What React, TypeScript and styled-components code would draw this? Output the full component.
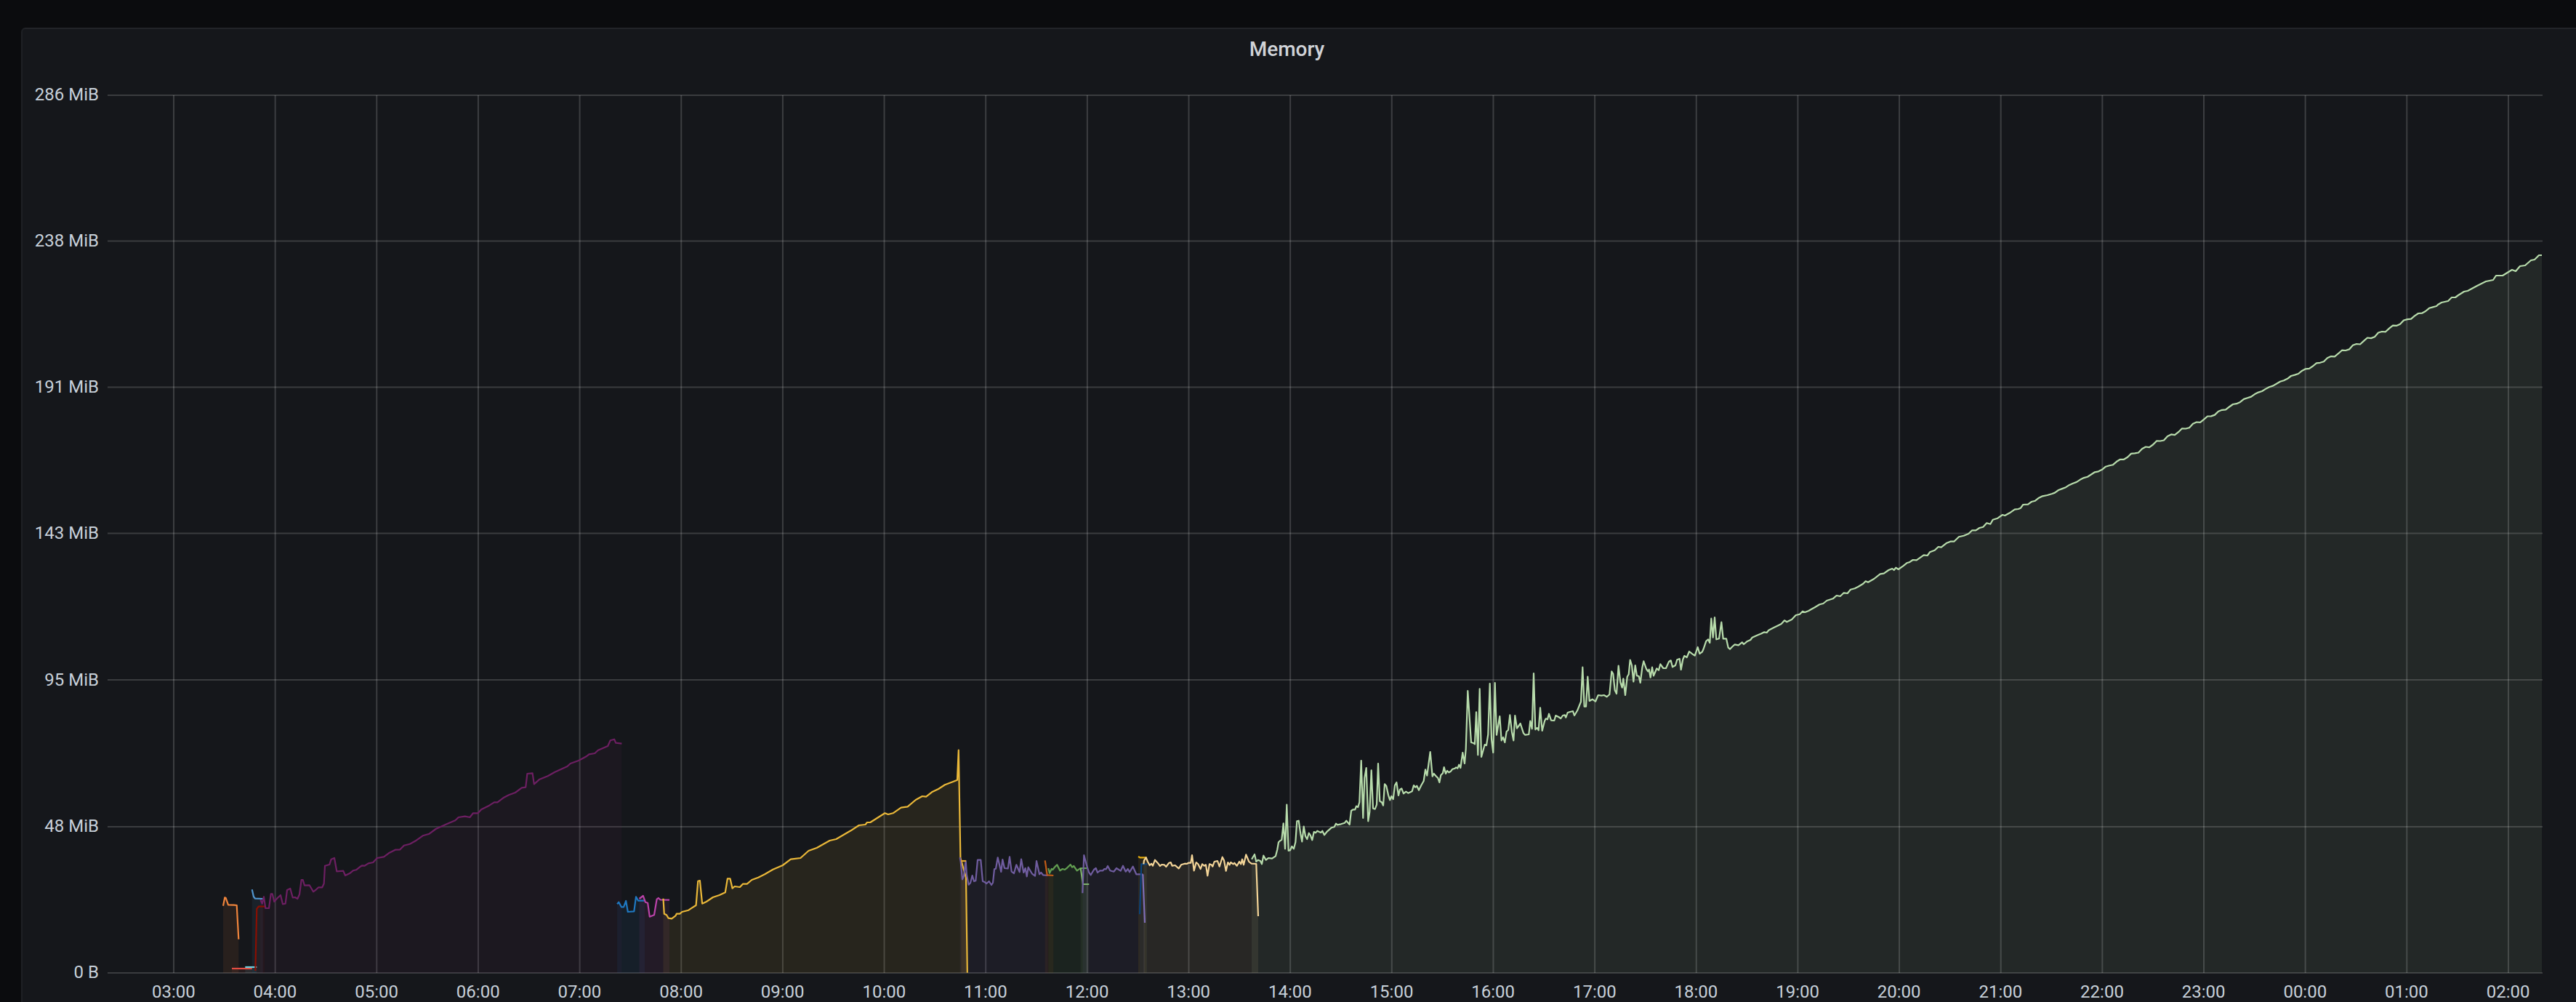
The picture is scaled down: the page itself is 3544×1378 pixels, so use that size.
import React from 'react';
import styled, { createGlobalStyle } from 'styled-components';

type Point = [number, number];

// points were read off zoomed crops, so each run keeps its crop offset and scale
const trace = (ox: number, oy: number, sx: number, sy: number, raw: string): Point[] =>
    raw
        .trim()
        .split(/\s+/)
        .map((pair) => {
            const [x, y] = pair.split(',').map(Number);
            return [ox + x / sx, oy + y / sy] as Point;
        });

const BASE_Y = 1338;
const PLOT_X = 148;
const PLOT_TOP = 130;
const PLOT_W = 3350;
const PLOT_H = 1209;
const HOUR = 139.65;
const FIRST_HOUR_X = 239;

const yTicks = ['286 MiB', '238 MiB', '191 MiB', '143 MiB', '95 MiB', '48 MiB', '0 B'];
const xTicks = [
    '03:00', '04:00', '05:00', '06:00', '07:00', '08:00', '09:00', '10:00', '11:00', '12:00', '13:00', '14:00',
    '15:00', '16:00', '17:00', '18:00', '19:00', '20:00', '21:00', '22:00', '23:00', '00:00', '01:00', '02:00',
];
const gridY = [131, 331.5, 532.5, 733.5, 935, 1137, 1338];

// long steady climb between 22:00-ish crops, same small stair-steps as the rest
const steadyClimb = (): Point[] => {
    const pts: Point[] = [];
    for (let x = 2827; x < 3354; x += 5) {
        const y = 679 - (x - 2823) * 0.4896;
        pts.push([x, y + 1.3 * Math.sin(x * 0.37) + 0.8 * Math.sin(x * 0.91)]);
    }
    return pts;
};

const purpleLong = [
    ...trace(280, 1180, 3, 3, `235,172 242,188 249,160 256,207 270,207 278,148 284,148 292,180 305,165 318,153 327,190 338,188 345,132 358,126 368,163 378,162 388,168 396,150 404,90 410,90 417,113 437,112 453,139 465,130 475,121 490,121 497,105 501,32 520,27 527,5 540,0 550,55 577,53 585,72 605,62 617,52 630,49 645,37 655,31 665,32 680,22 700,18`),
    ...trace(200, 950, 2.24, 3, `714,690 735,685 750,670 770,656 785,655 797,638 815,632 835,617 855,598 875,590 895,570 915,558 935,546 955,535 965,522 985,518 1000,522 1010,505 1025,505 1035,490 1060,473 1075,460 1085,460 1105,440 1120,430 1140,420 1160,400 1172,398 1177,342 1193,340 1198,385 1215,365 1240,352 1262,335 1300,312 1310,300 1335,288 1360,270 1367,262 1385,258 1395,245 1425,228 1433,205 1445,200 1450,215 1468,218`),
];

const yellowLong = trace(800, 950, 2.24, 3, `252,857 255,920 262,925 268,938 278,940 290,928 293,920 303,920 310,912 330,905 340,896 353,885 359,785 365,783 372,878 385,870 405,852 425,843 443,832 450,775 458,775 465,815 472,807 488,810 497,797 510,797 525,780 545,770 565,757 590,737 620,720 645,695 675,690 700,660 725,648 765,618 785,612 830,577 855,555 875,552 880,543 890,543 935,505 945,510 960,505 985,482 1005,478 1030,450 1050,435 1062,437 1080,418 1100,405 1120,388 1145,375 1158,368 1162,245 1168,690 1185,770 1189,1163`);

const greenLong = [
    ...trace(1280, 1120, 3, 3, `1326,185 1338,165 1345,195 1352,188 1362,192 1368,205 1375,170 1385,188 1395,180 1410,182 1425,172`),
    ...trace(1720, 920, 3, 3, `112,745 117,715 125,707 130,705 137,637 144,742 151,560 158,750 165,748 172,732 180,742 187,715 193,628 200,626 208,680 214,712 221,650 228,690 235,702 242,677 248,685 256,706 263,672 270,676 277,668 285,672 292,675 298,668 306,685 318,670 335,655 347,652 354,638 360,643 375,640 390,635 397,626 410,642 417,585 425,580 433,580 438,566 445,570 451,550 458,378 466,615 472,450 479,408 487,628 493,590 500,418 507,575 515,578 522,560 528,390 535,545 543,550 549,563 555,475 562,483 570,520 577,541 583,525 590,537 597,480 604,468 612,522 618,498 625,493 633,514 643,506 652,512 668,505 675,480 682,488 688,482 696,500 706,480 716,462 723,415 730,440 743,342 752,443 758,432 768,443 775,450 781,468 787,438 795,430 800,405 807,432 813,420 820,427 828,422 835,413 845,410 850,406 856,410 862,395 868,408 877,345 885,390 890,330 898,90 912,303 920,305 927,310 933,178 940,355 947,82 954,363 968,312 975,315 982,270 989,60 996,290 1003,345 1010,57 1017,272 1030,195 1037,295 1044,282 1051,303 1058,258 1065,252 1072,190 1080,260 1087,295 1093,192 1101,245 1115,225 1128,265 1135,272 1150,270 1156,215 1163,247 1170,18 1177,250 1184,243 1190,253 1197,160`),
    ...trace(2000, 880, 3, 3, `365,375 375,335 380,325 387,328 393,305 402,332 415,333 421,312 433,318 442,324 450,312 458,310 463,320 470,300 480,297 492,294 498,312 510,292 525,255 532,113 539,275 546,275 553,152 560,252 572,245 585,254 596,228 610,230 620,228 632,235 643,225 652,130 658,140 665,208 672,222 680,107 688,175 695,197 700,160 708,228 716,152 722,142 728,83 735,105 742,172 749,105 756,148 764,150 770,177 778,115 784,88 795,120 802,130 806,122 812,155 819,113 825,148 838,118 846,125 853,100 865,117 876,117 888,90 896,85 903,112 915,105 922,82 932,78 938,123 946,80 952,66 962,72 972,48 985,58 995,65 1007,30 1015,57 1025,50`),
    ...trace(2340, 680, 3, 3, `10,640 22,605 30,598 37,612 43,512 50,590 57,507 64,598 75,595 85,527 92,595 105,595 113,632 120,638 130,628 140,619 155,622 170,610 177,618 190,607 205,600 212,590 230,582 250,574 262,568 272,570 280,560 300,550 320,540 332,534 345,520 355,526 375,516 392,498 408,494 420,482 430,486 445,480 455,474 470,466 490,454 505,450 520,438 545,430 560,417 575,420 590,406 605,408 618,392 635,388 650,380 670,368 680,358 690,362 715,348 740,328 755,326 775,312 790,306 797,312 805,302 815,309 835,295 850,283 860,280 875,270 890,271 920,250 935,252 945,238 965,230 980,216 992,218 1015,200 1030,194 1045,194 1065,175 1085,170 1105,162 1120,148 1135,148 1150,138 1165,134 1180,118 1195,122 1205,104 1225,98 1245,84 1255,87 1275,76 1295,62 1310,60 1320,56 1330,42 1350,41 1365,30 1380,26 1395,14 1410,7 1430,3 1450,-3`),
    ...steadyClimb(),
    ...trace(0, 0, 1, 1, `3354,419 3359,416 3368,414 3373,409 3378,409 3382,406 3390,401 3395,400 3408,393 3420,387 3430,385 3434,379 3443,379 3456,371 3461,373 3467,366 3474,365 3482,358 3487,357 3493,351 3497,351`),
];

type SeriesDef = { color: string; points: Point[] };

const series: SeriesDef[] = [
    { color: '#EF843C', points: trace(280, 1180, 3, 3, `81,197 88,163 92,165 102,193 125,194 137,195 145,335`) },
    { color: '#E24D42', points: trace(280, 1180, 3, 3, `117,456 200,456`) },
    { color: '#6ED0E0', points: trace(280, 1180, 3, 3, `172,450 220,450`) },
    { color: '#5195CE', points: trace(280, 1180, 3, 3, `200,130 207,160 213,167 240,168 245,168`) },
    { color: '#890F02', points: trace(280, 1180, 3, 3, `214,465 220,210 227,200 252,200`) },
    { color: '#6D1F62', points: purpleLong },
    { color: '#1F78C1', points: trace(800, 950, 2.24, 3, `110,880 115,872 123,892 130,892 137,867 143,912 162,910 168,850 175,866 195,866`) },
    { color: '#BA43A9', points: trace(800, 950, 2.24, 3, `178,858 190,846 197,872 204,875 210,932 224,925 232,860 237,855 243,862 271,863`) },
    { color: '#EAB839', points: yellowLong },
    { color: '#705DA0', points: trace(1280, 1120, 3, 3, `122,178 125,195 132,268 138,255 146,192 150,250 158,290 165,283 173,252 180,276 187,274 195,188 208,188 216,276 222,278 232,285 242,276 252,291 258,282 264,226 270,224 278,178 292,237 298,186 306,222 320,223 327,175 335,236 345,243 355,208 368,238 375,185 385,240 392,222 398,256 404,218 420,245 432,254 438,192 450,247 457,240 465,250 485,252`) },
    { color: '#E5A72E', points: trace(1280, 1120, 3, 3, `127,192 147,192`) },
    { color: '#C15C17', points: trace(1280, 1120, 3, 3, `473,190 482,250 508,252`) },
    { color: '#629E51', points: trace(1280, 1120, 3, 3, `487,222 492,242 500,225 505,228 515,215 523,208 535,232 545,225 555,228 565,220 578,207 585,218 592,213 605,232 618,223 622,222 645,222`) },
    { color: '#7EB26D', points: trace(1280, 1120, 3, 3, `620,222 630,288 655,288`) },
    { color: '#705DA0', points: trace(1280, 1120, 3, 3, `628,325 634,168 645,210 655,240 662,250 675,228 683,222 690,240 700,232 712,232 718,225 725,226 732,213 742,232 757,236 768,222 785,233 795,212 806,236 815,225 822,238 836,215 850,247 877,247`) },
    { color: '#806EB7', points: trace(1280, 1120, 3, 3, `877,247 885,447`) },
    { color: '#E5AC0E', points: trace(1280, 1120, 3, 3, `858,174 865,178 890,178 893,178`) },
    { color: '#0A437C', points: trace(1280, 1120, 3, 3, `864,412 871,205 895,205`) },
    { color: '#F4D598', points: trace(1280, 1120, 3, 3, `880,205 882,190 890,178 897,195 905,210 912,203 918,212 927,188 938,200 948,213 955,207 965,208 973,216 985,200 992,198 998,212 1010,210 1025,223 1035,208 1050,203 1058,204 1065,200 1075,200 1080,168 1088,232 1097,198 1105,205 1115,225 1122,205 1130,212 1137,208 1144,253 1152,205 1160,208 1165,215 1172,195 1185,192 1193,215 1205,176 1212,190 1220,233 1228,198 1235,208 1240,198 1250,205 1255,200 1265,212 1275,195 1282,205 1287,185 1293,208 1303,166 1315,195 1325,203 1345,204 1353,420`) },
    { color: '#B7DBAB', points: greenLong },
];

const toAttr = (points: Point[]) => points.map(([x, y]) => `${x.toFixed(1)},${y.toFixed(1)}`).join(' ');

const toArea = (points: Point[]) => {
    const first = points[0];
    const last = points[points.length - 1];
    return toAttr([[first[0], BASE_Y], ...points, [last[0], BASE_Y]]);
};

const App: React.FC = () => {
    return (
        <>
            <GlobalStyle />
            <Page>
                <Panel>
                    <PanelTitle>Memory</PanelTitle>
                    <ChartRow>
                        <YAxis>
                            {yTicks.map((tick) => (
                                <YTick key={tick}>{tick}</YTick>
                            ))}
                        </YAxis>
                        <Plot viewBox={`${PLOT_X} ${PLOT_TOP} ${PLOT_W} ${PLOT_H}`}>
                            {xTicks.map((tick, i) => {
                                const x = FIRST_HOUR_X + i * HOUR;
                                return <GridV key={tick} x1={x} x2={x} y1={131} y2={BASE_Y} />;
                            })}
                            {gridY.map((y) => (
                                <GridH key={y} x1={PLOT_X} x2={PLOT_X + PLOT_W} y1={y} y2={y} />
                            ))}
                            {series.map((s, i) => (
                                <Area key={i} points={toArea(s.points)} $color={s.color} />
                            ))}
                            {series.map((s, i) => (
                                <Line key={i} points={toAttr(s.points)} $color={s.color} />
                            ))}
                        </Plot>
                    </ChartRow>
                    <XAxis>
                        {xTicks.map((tick) => (
                            <XTick key={tick}>{tick}</XTick>
                        ))}
                    </XAxis>
                </Panel>
            </Page>
        </>
    );
};

export default App;

const GlobalStyle = createGlobalStyle`
    html, body {
        margin: 0;
        height: 100%;
        background: #0b0c0e;
        overflow: hidden;
    }
`;

const Page = styled.div`
    width: 3544px;
    height: 1378px;
    box-sizing: border-box;
    padding: 38px 0 0 29px;
    background: #0b0c0e;
    overflow: hidden;
    font-family: Roboto, "Liberation Sans", sans-serif;
`;

const Panel = styled.div`
    height: 100%;
    box-sizing: border-box;
    background: #15171b;
    border-top: 2px solid #222428;
    border-left: 2px solid #1e2024;
    border-top-left-radius: 6px;
    display: flex;
    flex-direction: column;
`;

const PanelTitle = styled.div`
    flex: none;
    height: 90px;
    padding-right: 34px;
    line-height: 56px;
    text-align: center;
    font-size: 28px;
    font-weight: 500;
    color: #d0d3d8;
`;

const ChartRow = styled.div`
    flex: none;
    display: flex;
    height: ${PLOT_H}px;
`;

const YAxis = styled.div`
    flex: none;
    width: 117px;
    height: 1237px;
    margin-top: -15px;
    box-sizing: border-box;
    padding-right: 12px;
    display: flex;
    flex-direction: column;
    justify-content: space-between;
    align-items: flex-end;
`;

const YTick = styled.div`
    height: 30px;
    line-height: 30px;
    font-size: 24px;
    color: #c7d0d9;
    white-space: nowrap;
`;

const Plot = styled.svg`
    flex: none;
    display: block;
    width: ${PLOT_W}px;
    height: ${PLOT_H}px;
`;

const GridV = styled.line`
    stroke: rgba(255, 255, 255, 0.17);
    stroke-width: 2;
`;

const GridH = styled.line`
    stroke: rgba(255, 255, 255, 0.16);
    stroke-width: 2;
`;

const Area = styled.polygon<{ $color: string }>`
    fill: ${(p) => p.$color};
    fill-opacity: 0.085;
    stroke: none;
`;

const Line = styled.polyline<{ $color: string }>`
    fill: none;
    stroke: ${(p) => p.$color};
    stroke-width: 2.2;
    stroke-linejoin: round;
`;

const XAxis = styled.div`
    flex: none;
    display: flex;
    margin-left: 138px;
    padding-top: 10px;
`;

const XTick = styled.div`
    flex: none;
    width: ${HOUR}px;
    line-height: 30px;
    text-align: center;
    font-size: 24px;
    color: #c7d0d9;
`;
